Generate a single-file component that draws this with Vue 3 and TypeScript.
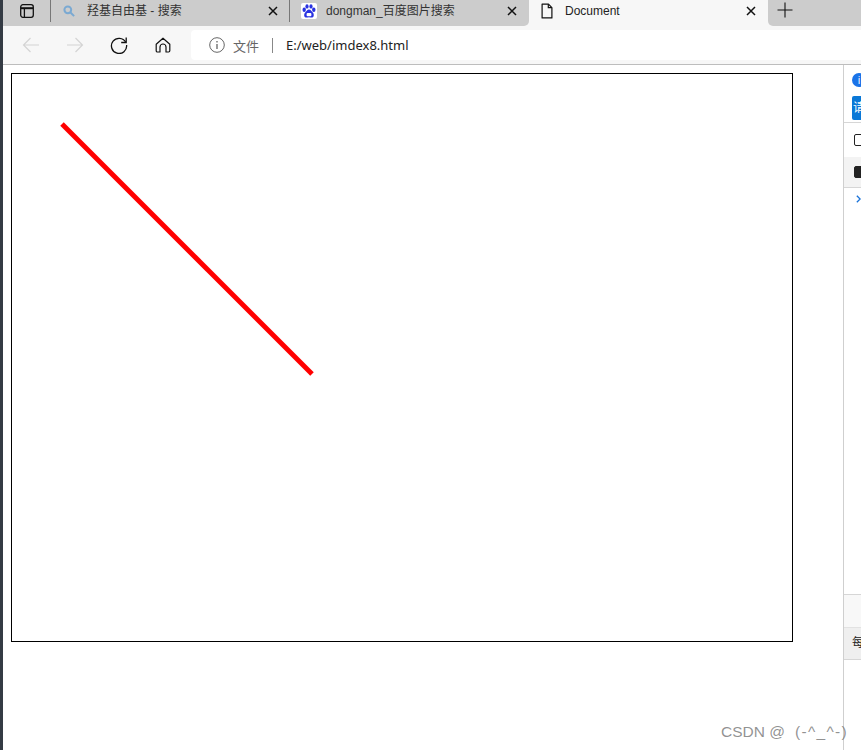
<script setup lang="ts">
interface Tab { title: string; kind: 'search' | 'baidu' }
const tabs: Tab[] = [
  { title: '羟基自由基 - 搜索', kind: 'search' },
  { title: 'dongman_百度图片搜索', kind: 'baidu' },
]
</script>

<template>
  <div class="app">
    <div class="edge"></div>
    <div class="browser">
      <div class="tabstrip">
        <div class="inactive">
          <button class="tabs-btn" aria-label="tabs">
            <svg width="16" height="16" viewBox="0 0 16 16" fill="none" stroke="#111" stroke-width="1.3">
              <rect x="1.7" y="1.7" width="12.6" height="12.6" rx="2.2" />
              <path d="M2 5.2h12" stroke-width="2" />
              <path d="M5.4 5v9" />
            </svg>
          </button>
          <div v-for="t in tabs" :key="t.title" class="tab">
            <span class="fav">
              <svg v-if="t.kind === 'search'" width="14" height="14" viewBox="0 0 14 14" fill="none" stroke="#7aa9d2" stroke-width="2">
                <circle cx="5.8" cy="5.8" r="3.4" />
                <path d="M8.5 8.5l3.6 3.6" />
              </svg>
              <svg v-else width="16" height="16" viewBox="0 0 16 16">
                <rect width="16" height="16" rx="2" fill="#fff" />
                <g fill="#2932e1">
                  <ellipse cx="3.2" cy="6.8" rx="1.7" ry="2.2" />
                  <ellipse cx="6" cy="3.4" rx="1.6" ry="2.2" />
                  <ellipse cx="10" cy="3.4" rx="1.6" ry="2.2" />
                  <ellipse cx="12.8" cy="6.8" rx="1.7" ry="2.2" />
                  <path d="M8 6.4c-1.8 0-2.4 1.8-3.8 3C2.8 10.700 2.600 14.600 5.500 14.600c1 0 1.500-.4 2.500-.4s1.500.4 2.500.4c2.900 0 2.700-3.900 1.300-5.200-1.400-1.200-2-3-3.800-3z" />
                </g>
                <rect x="5.600" y="10" width="4.800" height="3.200" rx="1" fill="#fff" />
              </svg>
            </span>
            <span class="title">{{ t.title }}</span>
            <svg class="close" width="10" height="10" viewBox="0 0 10 10" stroke="#111" stroke-width="1.500">
              <path d="M1 1l8 8M9 1l-8 8" />
            </svg>
          </div>
        </div>
        <div class="tab-active">
          <span class="fav">
            <svg width="14" height="16" viewBox="0 0 14 16" fill="none" stroke="#111" stroke-width="1.2">
              <path d="M2.100 1.100h6.400l3.400 3.500v10.300H2.100z" stroke-linejoin="round" />
              <path d="M8.300 1.200v3.500h3.500" />
            </svg>
          </span>
          <span class="title">Document</span>
          <svg class="close" width="10" height="10" viewBox="0 0 10 10" stroke="#111" stroke-width="1.500">
            <path d="M1 1l8 8M9 1l-8 8" />
          </svg>
        </div>
        <div class="plus">
          <svg width="16" height="16" viewBox="0 0 16 16" stroke="#111" stroke-width="1.100">
            <path d="M8 0.500v15M0.500 8h15" />
          </svg>
        </div>
      </div>

      <div class="toolbar">
        <div class="navs">
          <span class="nav">
            <svg width="18" height="16" viewBox="0 0 18 16" fill="none" stroke="#d4d4d4" stroke-width="1.200"><path d="M17 8H1.500M8.500 1L1.500 8l7 7" /></svg>
          </span>
          <span class="nav">
            <svg width="18" height="16" viewBox="0 0 18 16" fill="none" stroke="#d4d4d4" stroke-width="1.200"><path d="M1 8h15.500M9.500 1l7 7-7 7" /></svg>
          </span>
          <span class="nav">
            <svg width="18" height="18" viewBox="0 0 18 18" fill="none" stroke="#111" stroke-width="1.300"><path d="M15.700 6.200A7.600 7.600 0 1 0 16.600 9" /><path d="M16.200 1.500v5h-5" /></svg>
          </span>
          <span class="nav">
            <svg width="16" height="16" viewBox="0 0 16 16" fill="none" stroke="#111" stroke-width="1.200"><path d="M1.200 7.200L8 1.200l6.800 6v6.600a1.200 1.200 0 0 1-1.200 1.200h-2.600V10a3 3 0 0 0-6 0v5H2.400a1.200 1.200 0 0 1-1.200-1.200z" stroke-linejoin="round" /></svg>
          </span>
        </div>
        <div class="address">
          <svg class="info" width="16" height="16" viewBox="0 0 16 16" fill="none" stroke="#666" stroke-width="1">
            <circle cx="8" cy="8" r="7.300" />
            <path d="M8 7v5M8 4v1.400" stroke-width="1.300" />
          </svg>
          <span class="file">文件</span>
          <span class="divider"></span>
          <span class="url">E:/web/imdex8.html</span>
        </div>
      </div>

      <div class="viewport">
        <main class="page">
          <div class="canvas">
            <svg width="780" height="567" viewBox="0 0 780 567">
              <line x1="50" y1="50" x2="300" y2="300" stroke="#ff0000" stroke-width="5" />
            </svg>
          </div>
        </main>
        <aside class="side">
          <div class="side-top">
            <span class="dot">i</span>
            <span class="blue-btn">请</span>
          </div>
          <div class="side-row outline"><span class="box"></span></div>
          <div class="side-row filled"><span class="box solid"></span></div>
          <div class="side-chevron">
            <svg width="6" height="10" viewBox="0 0 6 10" fill="none" stroke="#1a73d9" stroke-width="1.600"><path d="M1 1l4 4-4 4" /></svg>
          </div>
          <div class="side-spacer"></div>
          <div class="side-foot-a"></div>
          <div class="side-foot-b">每日</div>
        </aside>
      </div>
    </div>
    <div class="mark"><span class="mark-a">CSDN @</span><span class="mark-b">(-^_^-)</span></div>
  </div>
</template>

<style>
html, body { margin: 0; overflow: hidden; background: #fff; }
</style>

<style scoped>
.app {
  position: relative;
  width: 861px;
  height: 750px;
  display: flex;
  overflow: hidden;
  font-family: "Noto Sans", "Noto Sans CJK SC", sans-serif;
}
.edge { width: 3px; background: #343b44; flex: none; }
.browser { flex: 1; min-width: 0; display: flex; flex-direction: column; }

.tabstrip {
  height: 26px;
  flex: none;
  display: flex;
  background: #f7f7f7;
  color: #222;
}
.inactive {
  height: 26px;
  display: flex;
  flex: none;
  background: #cccccc;
  border-bottom-right-radius: 5px;
}
.tabs-btn {
  width: 48px;
  flex: none;
  margin: 0;
  padding: 0 0 1px;
  border: 0;
  border-right: 1px solid #777;
  height: 22px;
  background: none;
  display: flex;
  align-items: center;
  justify-content: center;
}
.tab, .tab-active {
  width: 239px;
  flex: none;
  height: 22px;
  display: flex;
  align-items: center;
  padding: 0 11px;
  box-sizing: border-box;
  font-family: "Liberation Sans", "Noto Sans CJK SC", sans-serif;
  font-size: 12px;
  line-height: 20px;
  color: #333;
}
.tab { border-right: 1px solid #777; }
.tab:last-child { border-right: 0; padding-right: 12px; }
.tab-active { padding-right: 12px; color: #222; }
.fav { width: 24px; flex: none; display: flex; align-items: center; }
.title { flex: 1; min-width: 0; white-space: nowrap; overflow: hidden; margin-left: 1px; }
.close { flex: none; }
.plus {
  flex: 1;
  height: 26px;
  box-sizing: border-box;
  background: #cccccc;
  border-bottom-left-radius: 5px;
  padding: 2px 0 0 10px;
  display: flex;
  align-items: flex-start;
}
.plus svg { margin-left: -1px; }

.toolbar {
  height: 39px;
  flex: none;
  box-sizing: border-box;
  padding-top: 4px;
  background: #f7f7f7;
  border-bottom: 1px solid #bdbdbd;
  display: flex;
}
.navs { width: 188px; flex: none; height: 30px; display: flex; align-items: center; padding-left: 6px; box-sizing: border-box; }
.nav { width: 44px; flex: none; display: flex; justify-content: center; }
.address {
  flex: 1;
  height: 30px;
  background: #fff;
  border-radius: 4px 0 0 4px;
  display: flex;
  align-items: center;
  padding-left: 18px;
  font-size: 13px;
}
.info { flex: none; }
.file { margin-left: 8px; color: #666; }
.divider { width: 1px; height: 15px; background: #888; margin: 0 13px; }
.url { color: #222; white-space: nowrap; }

.viewport { flex: 1; min-height: 0; display: flex; }
.page { flex: 1; min-width: 0; padding: 8px; background: #fff; }
.canvas {
  width: 780px;
  height: 567px;
  border: 1px solid #000;
}
.canvas svg { display: block; }

.side {
  width: 17px;
  flex: none;
  border-left: 1px solid #cfcfcf;
  display: flex;
  flex-direction: column;
  overflow: hidden;
  background: #fff;
}
.side-top { height: 58px; flex: none; box-sizing: border-box; border-bottom: 1px solid #d6d6d6; padding: 8px 0 0 8px; }
.dot {
  display: block;
  width: 14px;
  height: 14px;
  border-radius: 50%;
  background: #1a73e8;
  color: #fff;
  font-size: 10px;
  line-height: 14px;
  text-align: center;
}
.blue-btn {
  display: block;
  width: 40px;
  height: 24px;
  margin-top: 9px;
  background: #0a78d7;
  border-radius: 2px;
  color: #fff;
  font-size: 12px;
  line-height: 24px;
  padding-left: 1px;
}
.side-row { flex: none; display: flex; align-items: center; padding-left: 10px; }
.outline { height: 34px; background: #fff; }
.filled { height: 30px; background: #f3f3f3; border-bottom: 1px solid #d6d6d6; }
.box { display: block; width: 14px; height: 10px; border: 1px solid #222; border-radius: 2px; flex: none; }
.box.solid { background: #222; }
.side-chevron { height: 22px; flex: none; display: flex; align-items: center; padding-left: 12px; }
.side-spacer { flex: 1; }
.side-foot-a { height: 33px; flex: none; background: #f8f8f8; border-top: 1px solid #d6d6d6; box-sizing: border-box; }
.side-foot-b {
  height: 33px;
  flex: none;
  box-sizing: border-box;
  background: #efefef;
  border-top: 1px solid #e2e2e2;
  border-bottom: 1px solid #d6d6d6;
  padding-left: 8px;
  font-size: 12px;
  line-height: 30px;
  white-space: nowrap;
  color: #222;
  margin-bottom: 90px;
}

.mark {
  position: absolute;
  left: 721px;
  top: 722px;
  display: flex;
  gap: 10px;
  font-family: "Liberation Sans", sans-serif;
  font-size: 15.5px;
  line-height: 20px;
  color: rgba(110, 110, 110, 0.75);
  white-space: nowrap;
}
.mark-b { letter-spacing: 1.3px; }
</style>
